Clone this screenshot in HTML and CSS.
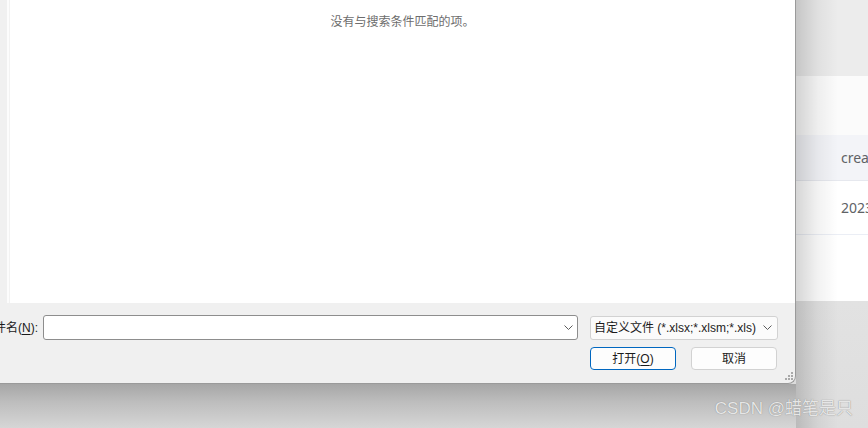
FILE: index.html
```html
<!DOCTYPE html>
<html lang="zh-CN">
<head>
    <meta charset="UTF-8">
    <meta name="viewport" content="width=device-width, initial-scale=1.0">
    <title>打开</title>
    <link rel="stylesheet" href="styles.css">
</head>
<body>
    <div class="screen">
        <div class="dialog-col">
            <div class="dialog">
                <div class="results">
                    <div class="results-inner">
                        <p class="empty">没有与搜索条件匹配的项。</p>
                    </div>
                </div>

                <div class="footer">
                    <div class="name-row">
                        <label class="name-label" for="file-name">文件名(<u>N</u>):</label>
                        <div class="combo name-box">
                            <input type="text" id="file-name">
                            <svg class="chev" width="9" height="5" viewBox="0 0 9 5"><polyline points="0.5,0.5 4.5,4.5 8.5,0.5"/></svg>
                        </div>
                        <div class="combo filter">
                            <span>自定义文件 (*.xlsx;*.xlsm;*.xls)</span>
                            <svg class="chev" width="9" height="5" viewBox="0 0 9 5"><polyline points="0.5,0.5 4.5,4.5 8.5,0.5"/></svg>
                        </div>
                    </div>
                    <div class="btn-row">
                        <button class="btn primary" type="button">打开(<u>O</u>)</button>
                        <button class="btn" type="button">取消</button>
                    </div>
                </div>

                <!-- resize grip -->
                <svg class="grip" width="9" height="9" viewBox="0 0 9 9">
                    <rect x="6" y="0" width="2" height="2"/>
                    <rect x="3" y="3" width="2" height="2"/>
                    <rect x="6" y="3" width="2" height="2"/>
                    <rect x="0" y="6" width="2" height="2"/>
                    <rect x="3" y="6" width="2" height="2"/>
                    <rect x="6" y="6" width="2" height="2"/>
                </svg>
            </div>
            <div class="drop-shadow"></div>
        </div>

        <div class="page">
            <div class="page-header"></div>
            <div class="page-toolbar"></div>
            <div class="cell head">crea</div>
            <div class="cell">2023</div>
            <div class="page-card-end"></div>
            <div class="page-bottom"></div>
        </div>

        <div class="watermark">CSDN @蜡笔是只</div>
    </div>
</body>
</html>
```

FILE: styles.css
```css
:root {
    --dialog-bg: #f0f0f0;
    --border-strong: #8d8d8d;
    --border-soft: #d2d2d2;
    --accent: #0067c0;
    --text: #1b1b1b;
}
* {
    margin: 0;
    padding: 0;
    box-sizing: border-box;
}
body {
    width: 868px;
    height: 428px;
    overflow: hidden;
    font-family: "Liberation Sans", "Noto Sans CJK SC", sans-serif;
    font-size: 12px;
    color: var(--text);
    background-color: #dcdcdc;
}
.screen {
    position: relative;
    display: flex;
    height: 428px;
}

/* ---------- dialog ---------- */
.dialog-col {
    flex: 0 0 796px;
    display: flex;
    flex-direction: column;
}
.dialog {
    position: relative;
    height: 384px;
    background-color: var(--dialog-bg);
    border-right: 1px solid #9a9a9a;
    border-bottom: 1px solid #9a9a9a;
    border-bottom-right-radius: 8px;
}
.results {
    height: 303px;
    margin-left: 7px;
    background-color: #fff;
    border-left: 2px solid #fcfcfc;
}
.results-inner {
    height: 100%;
    border-left: 1px solid #f2f2f2;
}
.empty {
    padding-top: 14px;
    text-align: center;
    line-height: 16px;
    color: #6d6d6d;
}
.footer {
    padding-top: 12px;
}
.name-row {
    display: flex;
    align-items: center;
    padding-right: 17px;
}
.name-label {
    flex: 0 0 60px;
    margin-left: -22px;
    margin-right: 5px;
    text-align: right;
    white-space: nowrap;
    line-height: 16px;
}
u {
    text-decoration-thickness: 1px;
    text-underline-offset: 2px;
}
.combo {
    display: flex;
    align-items: center;
    border-radius: 3px;
}
.name-box {
    flex: 1;
    height: 25px;
    background-color: #fff;
    border: 1px solid var(--border-strong);
    padding-right: 4px;
}
.name-box input {
    flex: 1;
    height: 100%;
    border: none;
    outline: none;
    background: transparent;
    font: inherit;
}
.filter {
    flex: 0 0 188px;
    height: 24px;
    margin-left: 12px;
    padding: 0 5px 0 3px;
    justify-content: space-between;
    background-color: #fbfbfb;
    border: 1px solid var(--border-soft);
    line-height: 16px;
    white-space: nowrap;
}
.chev {
    flex-shrink: 0;
}
.chev polyline {
    fill: none;
    stroke: #5c5c5c;
    stroke-width: 1;
}
.btn-row {
    display: flex;
    justify-content: flex-end;
    gap: 15px;
    margin-top: 7px;
    padding-right: 18px;
}
.btn {
    width: 86px;
    height: 23px;
    font: inherit;
    color: var(--text);
    line-height: 16px;
    background-color: #fdfdfd;
    border: 1px solid var(--border-soft);
    border-radius: 4px;
}
.btn.primary {
    border-color: var(--accent);
}
.grip {
    position: absolute;
    right: 1px;
    bottom: 2px;
    fill: #a9a9a9;
}
.drop-shadow {
    flex: 1;
    background: linear-gradient(#a6a6a6, #bdbdbd 40%, #d6d6d6);
}

/* ---------- web page behind ---------- */
.page {
    position: relative;
    flex: 1;
    min-width: 0;
    overflow: hidden;
    display: flex;
    flex-direction: column;
    background-color: #fff;
}
.page::after {
    content: "";
    position: absolute;
    inset: 0;
    background: linear-gradient(to right, rgba(0, 0, 0, 0.16), rgba(0, 0, 0, 0.05) 22px, rgba(0, 0, 0, 0) 42px);
}
.page-header {
    height: 76px;
    background-color: #ececec;
}
.page-toolbar {
    height: 59px;
    background-color: #fbfbfb;
}
.cell {
    height: 54px;
    padding-left: 45px;
    display: flex;
    align-items: center;
    font-family: "Noto Sans", "Liberation Sans", sans-serif;
    font-size: 14px;
    color: #606266;
    white-space: nowrap;
    border-bottom: 1px solid #ebeef5;
}
.cell.head {
    height: 46px;
    background-color: #f3f4f8;
    border-bottom-color: #e6e8ee;
}
.page-card-end {
    height: 66px;
}
.page-bottom {
    flex: 1;
    background: linear-gradient(#e2e2e2, #dedede);
}

.watermark {
    position: absolute;
    right: 15px;
    bottom: 8px;
    font-family: "Liberation Sans", "Noto Sans CJK SC", sans-serif;
    font-size: 17px;
    line-height: 22px;
    color: #e6e6e6;
    text-shadow: 0 0 1px #7a7a7a;
    white-space: nowrap;
}
```
